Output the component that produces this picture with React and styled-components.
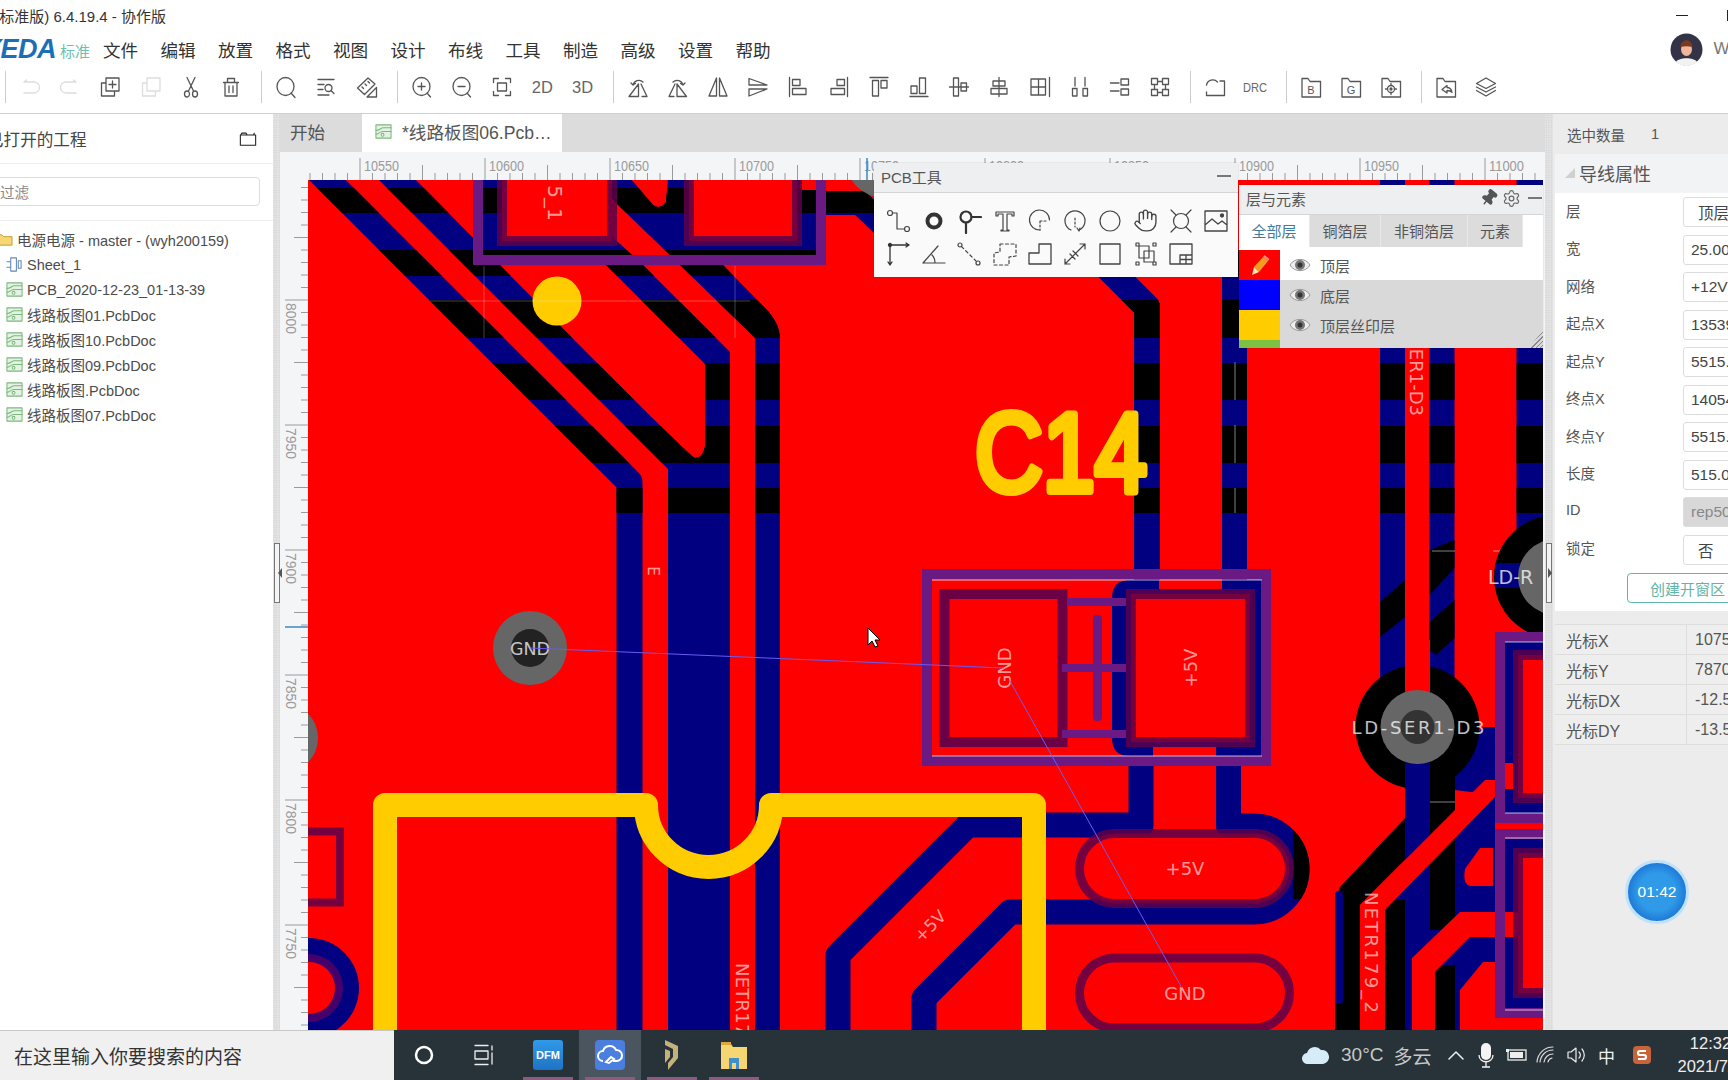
import React from 'react';
import styled, { createGlobalStyle } from 'styled-components';
import { Hand, Pin, Settings } from 'lucide-react';

const UI_FONT = '"Liberation Sans", "Noto Sans CJK SC", sans-serif';

const GlobalStyle = createGlobalStyle`
  html, body { margin: 0; padding: 0; background: #fff; }
  * { box-sizing: border-box; }
  body { font-family: ${UI_FONT}; color: #444; }
`;

const Page = styled.div`
  width: 1728px;
  height: 1080px;
  display: flex;
  flex-direction: column;
  overflow: hidden;
`;

/* ---------- top bars ---------- */
const TitleBar = styled.div`
  height: 30px;
  flex: none;
  display: flex;
  align-items: center;
  justify-content: space-between;
  font-size: 15px;
  color: #333;
`;

const TitleText = styled.div`
  width: 166px;
  display: flex;
  justify-content: flex-end;
  white-space: nowrap;
  overflow: hidden;
`;

const WinButtons = styled.div`
  display: flex;
  align-items: center;
  gap: 39px;
  margin-right: -11px;
`;

const WinMin = styled.span`
  width: 12px;
  height: 1px;
  background: #222;
`;

const WinMax = styled.span`
  width: 12px;
  height: 11px;
  border: 1px solid #222;
`;

const MenuRow = styled.div`
  height: 38px;
  flex: none;
  display: flex;
  align-items: center;
`;

const Logo = styled.div`
  width: 56px;
  display: flex;
  justify-content: flex-end;
  overflow: hidden;
  font-size: 27px;
  line-height: 32px;
  font-weight: 700;
  font-style: italic;
  color: #1b6fb9;
  letter-spacing: -0.5px;
  white-space: nowrap;
`;

const LogoTag = styled.span`
  margin: 2px 13px 0 4px;
  font-size: 15px;
  color: #6dbfb2;
`;

const MenuItem = styled.span`
  font-size: 17.6px;
  margin-right: 22.3px;
  color: #333;
`;

const UserBox = styled.div`
  margin-left: auto;
  margin-right: -10px;
  display: flex;
  align-items: center;
  gap: 11px;
  font-size: 17px;
  color: #777;
`;

const ToolRow = styled.div`
  height: 46px;
  flex: none;
  display: flex;
  align-items: flex-start;
  padding-top: 3px;
  padding-left: 0;
  margin-left: -5px;
  border-bottom: 1px solid #cfcfcf;
`;

const ToolSep = styled.span`
  width: 1px;
  height: 32px;
  margin: 0 4px 0 10px;
  background: #ccc;
  flex: none;
`;

const ToolBtn = styled.span`
  width: 40.2px;
  height: 32px;
  flex: none;
  display: flex;
  align-items: center;
  justify-content: center;
  font-size: ${p => (p.$small ? '13.5px' : '16.5px')};
  transform: ${p => (p.$small ? 'scaleX(.82)' : 'none')};
  color: #666;
`;

const Glyph = styled.svg`
  width: ${p => p.$size || 24}px;
  height: ${p => p.$size || 24}px;
  flex: none;
  fill: none;
  stroke: ${p => p.$color || '#555'};
  stroke-width: ${p => p.$weight || 1.3};
  stroke-linecap: round;
  stroke-linejoin: round;
`;

const GlyphText = styled.text`
  font-family: ${UI_FONT};
  font-size: 11px;
  fill: #555;
  stroke: none;
  text-anchor: middle;
`;

const TOOL_ICONS = {
  undo: <path d="M6 7h10a5.5 5.5 0 0 1 0 11H6M6 7l2.5-2" />,
  redo: <path d="M18 7H8a5.5 5.5 0 0 0 0 11h10M18 7l-2.5-2" />,
  copyAdd: <path d="M8 3h13v13H8zM8 8H3.500v13h13v-5M14.500 6v7M11 9.500h7" />,
  copy: <path d="M8 3h13v13H8zM8 8H3.500v13h13v-5" />,
  cut: <path d="M9.500 16 16 2.500M14.500 16 8 2.500M10.500 19a2.500 3 0 1 1-5 0 2.500 3 0 1 1 5 0zM18.500 19a2.500 3 0 1 1-5 0 2.500 3 0 1 1 5 0z" />,
  trash: <path d="M4.500 7.500h15M8.500 7V3.500h7V7M6 7.500V21h12V7.500M10 11v6.500M14 11v6.500" />,
  find: <path d="M20 11.500a8.500 9 0 1 1-17 0 8.500 9 0 1 1 17 0zM17 18l4 4.500" />,
  findList: <path d="M4 4.500h16M4 9.500h6M4 14.500h5M4 20h11M18 13a3.500 3.500 0 1 1-7 0 3.500 3.500 0 1 1 7 0zM17 15.500l3 3" />,
  ruler: <path d="M2.500 13 13 3l7 6-10.500 10.500zM7 12l1.500 1.500M10 9l1.500 1.500M13 6.500l1.500 1.500M21.500 12.500V22H12z" />,
  zoomIn: <path d="M20 11.500a8.500 9 0 1 1-17 0 8.500 9 0 1 1 17 0zM17 18l3.500 4M11.500 8v7M8 11.500h7" />,
  zoomOut: <path d="M20 11.500a8.500 9 0 1 1-17 0 8.500 9 0 1 1 17 0zM17 18l3.500 4M8 11.500h7" />,
  fit: <path d="M3.500 7.500V3.500h5M15.500 3.500h5v4M20.500 16.500v4h-5M8.500 20.500h-5v-4M7.500 8h9v8h-9z" />,
  rotL: <path d="M12.500 9v12.500H3zM15 9l6 12.500h-5M7 10a6 6 0 0 1 10-3M7 10l-2-2M7 10l2.500-1.500" />,
  rotR: <path d="M11 9v12.500h9.500zM9 9 3 21.500h5M17 10a6 6 0 0 0-10-3M17 10l2-2M17 10l-2.500-1.500" />,
  flipH: <path d="M10.500 3v18H3zM13.500 3v18H21z" />,
  flipV: <path d="M3 3.500 21 10H3zM3 14h18L3 21z" />,
  alignL: <path d="M3.500 2.500v19M6.500 4.500H14v6H6.500zM6.500 13.500h13.500v6H6.500z" />,
  alignR: <path d="M20.500 2.500v19M17.500 4.500H10v6h7.500zM17.500 13.500H4v6h13.500z" />,
  alignT: <path d="M3 2.500h18M5.500 5.500h6V21h-6zM14 5.500h6V13h-6z" />,
  alignB: <path d="M3 21.500h18M12.500 18.500h6V3h-6zM4 18.500h6V11H4z" />,
  alignV: <path d="M2.500 12h19M6.500 3h5v18h-5zM14 8h5.500v8H14z" />,
  alignH: <path d="M12 2.500v19M6 6h12v5H6zM4 13.500h16v5.500H4z" />,
  gridBar: <path d="M3 4h14.500v16H3zM10.500 4v16M3 12h14.500M21.500 2.500v19" />,
  distH: <path d="M7 2.500V11M17 2.500V11M4.500 13.500H9V21H4.500zM15 13.500h4.500V21H15z" />,
  distV: <path d="M2.500 8H11M2.500 16H11M13 4h7.500v6H13zM13 14h7.500v6H13z" />,
  cmd: <path d="M3.500 3.500h6v6h-6zM14.500 3.500h6v6h-6zM3.500 14.500h6v6h-6zM14.500 14.500h6v6h-6zM9.500 6.500h5M9.500 17.500h5M6.500 9.500v5M17.500 9.500v5" />,
  route: <path d="M3.500 10a6.500 6.500 0 0 1 11-3M17 6h4.500v14.500h-18V17" />,
  back: <path d="M3 3.500h6l2 3h10.500V22H3zM13 10.500 8 14.500l5 3.500v-2.500c2 0 4 .5 5 2-.5-3-2.500-5-5-5z" />,
  layers: <path d="M12 3 21.500 8.500 12 13.500 2.500 8.500zM2.500 12 12 17l9.500-5M2.500 15.500 12 21l9.500-5.500" />,
};

const LibGlyph = ({ children }) => (
  <Glyph viewBox="0 0 24 24">
    <path d="M3 3.500h6l2 3h10.500V22H3z" />
    {children}
  </Glyph>
);

const TOOL_GROUPS = [
  ['undo', 'redo', 'copyAdd', 'copy', 'cut', 'trash'],
  ['find', 'findList', 'ruler'],
  ['zoomIn', 'zoomOut', 'fit', '2D', '3D'],
  ['rotL', 'rotR', 'flipH', 'flipV', 'alignL', 'alignR', 'alignT', 'alignB', 'alignV', 'alignH', 'gridBar', 'distH', 'distV', 'cmd'],
  ['route', 'DRC'],
  ['libB', 'libG', 'libT'],
  ['back', 'layers'],
];

const renderTool = name => {
  if (name === '2D' || name === '3D') return <ToolBtn key={name}>{name}</ToolBtn>;
  if (name === 'DRC') return <ToolBtn key={name} $small>{name}</ToolBtn>;
  if (name === 'libB' || name === 'libG') {
    return (
      <ToolBtn key={name}>
        <LibGlyph><GlyphText x="12" y="18.500">{name[3]}</GlyphText></LibGlyph>
      </ToolBtn>
    );
  }
  if (name === 'libT') {
    return (
      <ToolBtn key={name}>
        <LibGlyph>
          <circle cx="12" cy="14" r="3.500" />
          <circle cx="12" cy="14" r="1" fill="#555" />
          <path d="M12 8.500v2M12 17.500v2M6.500 14h2M15.500 14h2" />
        </LibGlyph>
      </ToolBtn>
    );
  }
  const muted = name === 'undo' || name === 'redo' || name === 'copy';
  return (
    <ToolBtn key={name}>
      <Glyph viewBox="0 0 24 24" $color={muted ? '#ddd' : '#555'}>{TOOL_ICONS[name]}</Glyph>
    </ToolBtn>
  );
};

/* ---------- main area ---------- */
const Main = styled.div`
  flex: 1;
  min-height: 0;
  display: flex;
`;

const LeftPanel = styled.div`
  width: 273px;
  flex: none;
  background: #fff;
  display: flex;
  flex-direction: column;
`;

const PanelHead = styled.div`
  height: 50px;
  flex: none;
  display: flex;
  align-items: center;
  justify-content: space-between;
  padding: 0 16px 0 0;
  border-bottom: 1px solid #eee;
  font-size: 16.6px;
  color: #444;
`;

const HeadTitle = styled.span`
  margin-left: -13px;
`;

const FilterWrap = styled.div`
  height: 57px;
  flex: none;
  padding: 13px 13px 14px 0;
  border-bottom: 1px solid #eee;
`;

const FilterInput = styled.div`
  height: 29px;
  margin-left: -8px;
  padding-left: 7px;
  display: flex;
  align-items: center;
  border: 1px solid #ddd;
  border-radius: 4px;
  font-size: 14.5px;
  color: #888;
`;

const Tree = styled.div`
  padding-top: 6px;
  display: flex;
  flex-direction: column;
`;

const TreeRow = styled.div`
  height: 25px;
  display: flex;
  align-items: center;
  gap: 4px;
  padding-left: ${p => (p.$root ? '0' : '6px')};
  font-size: 14.5px;
  color: #4c4c4c;
  white-space: nowrap;
`;

const Splitter = styled.div`
  width: ${p => p.$w}px;
  flex: none;
  position: relative;
  background-color: #e2e2e2;
  background-image: radial-gradient(#c9c9c9 40%, transparent 45%);
  background-size: 2.500px 2.500px;
`;

const Grip = styled.div`
  position: absolute;
  top: 429px;
  left: ${p => p.$left}px;
  width: 6px;
  height: 60px;
  background: #f4f4f4;
  border: 1px solid #777;
  &::after {
    content: '';
    position: absolute;
    top: 24px;
    left: ${p => (p.$right ? '1px' : '-2px')};
    border: 5px solid transparent;
    ${p => (p.$right ? 'border-left: 4px solid #555;' : 'border-right: 4px solid #555;')}
  }
`;

const Center = styled.div`
  width: 1265px;
  flex: none;
  display: flex;
  flex-direction: column;
  background: #f4f5f7;
`;

const TabBar = styled.div`
  height: 38px;
  flex: none;
  display: flex;
  background: #dcdcdc;
`;

const Tab = styled.div`
  height: 38px;
  width: ${p => p.$w}px;
  display: flex;
  align-items: center;
  gap: 10px;
  padding-left: ${p => p.$pad}px;
  padding-bottom: 3px;
  font-size: 17.6px;
  color: #555;
  white-space: nowrap;
  background: ${p => (p.$active ? '#fff' : 'transparent')};
`;

const Workspace = styled.div`
  flex: 1;
  min-height: 0;
  position: relative;
  display: flex;
  flex-direction: column;
`;

const RulerSvg = styled.svg`
  display: block;
  flex: none;
`;

const RulerText = styled.text`
  font-family: "Liberation Sans", sans-serif;
  font-size: 14px;
  fill: #9a9a9a;
`;

const CanvasRow = styled.div`
  flex: 1;
  min-height: 0;
  display: flex;
`;

const BoardSvg = styled.svg`
  display: block;
  width: 1235px;
  height: 850px;
  flex: none;
  background: #ff0000;
`;

const BoardLabel = styled.text`
  font-family: "DejaVu Sans", sans-serif;
  font-size: ${p => p.$size || 18}px;
  fill: #fff;
  fill-opacity: ${p => p.$alpha || 0.62};
  text-anchor: ${p => p.$anchor || 'middle'};
  dominant-baseline: central;
`;

const SilkText = styled.text`
  font-family: "Liberation Sans", sans-serif;
  font-size: 112px;
  fill: #ffcc00;
  stroke: #ffcc00;
  stroke-width: 8px;
  stroke-linejoin: round;
  stroke-linecap: round;
`;

/* ---------- floating panels ---------- */
const FloatPanel = styled.div`
  position: absolute;
  left: ${p => p.$left}px;
  top: ${p => p.$top}px;
  width: ${p => p.$w}px;
  height: ${p => p.$h}px;
  background: ${p => p.$bg};
  display: flex;
  flex-direction: column;
  box-shadow: 0 0 2px rgba(0, 0, 0, 0.15);
`;

const FloatHead = styled.div`
  height: 30px;
  flex: none;
  display: flex;
  align-items: center;
  padding: 0 ${p => (p.$tight ? 1 : 7)}px 3px 7px;
  gap: 4px;
  background: #eeeff1;
  border-bottom: 1px solid #d4d4d4;
  font-size: 15px;
  color: #555;
`;

const FloatTitle = styled.span`
  margin-right: auto;
`;

const MinusBar = styled.span`
  width: 14px;
  height: 2px;
  background: #777;
  margin-left: 3px;
`;

const PinMark = styled(Pin)`
  transform: rotate(40deg);
`;

const ToolGrid = styled.div`
  display: grid;
  grid-template-columns: repeat(10, 35.300px);
  grid-auto-rows: 33px;
  padding: 11px 0 0 7px;
`;

const ToolCell = styled.span`
  display: flex;
  align-items: center;
  justify-content: center;
  color: #444;
`;

const LayerTabs = styled.div`
  height: 35px;
  flex: none;
  display: flex;
  padding-bottom: 3px;
  background: #fff;
`;

const LayerTab = styled.div`
  width: ${p => p.$w}px;
  display: flex;
  align-items: center;
  justify-content: center;
  padding-bottom: 2px;
  font-size: 15px;
  color: ${p => (p.$active ? '#3f7c9c' : '#555')};
  background: ${p => (p.$active ? '#fff' : '#dcdcdc')};
  border-right: 1px solid #e8e8e8;
`;

const LayerRow = styled.div`
  height: ${p => p.$h}px;
  flex: none;
  display: flex;
  align-items: center;
  gap: 9px;
  font-size: 15px;
  color: #555;
  background: ${p => (p.$on ? '#fff' : '#d9d9d9')};
`;

const Swatch = styled.span`
  width: 41px;
  height: 100%;
  margin-right: 0;
  flex: none;
  display: flex;
  align-items: center;
  justify-content: center;
  background: ${p => p.$color};
`;

const Hatch = styled.span`
  position: absolute;
  right: 0;
  bottom: 0;
  width: 14px;
  height: 18px;
  background: repeating-linear-gradient(135deg, transparent 0 2px, #888 2px 3px);
  clip-path: polygon(100% 0, 100% 100%, 0 100%);
`;

/* ---------- right panel ---------- */
const RightPanel = styled.div`
  width: 175px;
  flex: none;
  position: relative;
  overflow: hidden;
  background: #ececec;
  display: flex;
  flex-direction: column;
`;

const CountBar = styled.div`
  height: 40px;
  flex: none;
  display: flex;
  align-items: center;
  gap: 26px;
  padding-left: 14px;
  font-size: 14.5px;
  color: #555;
`;

const PropHead = styled.div`
  height: 39px;
  flex: none;
  margin-left: 2px;
  display: flex;
  align-items: center;
  gap: 4px;
  padding-left: 10px;
  padding-bottom: 2px;
  background: #f2f3f5;
  font-size: 18px;
  color: #555;
  &::before {
    content: '';
    border-bottom: 10px solid #d0d0d0;
    border-left: 10px solid transparent;
  }
`;

const PropForm = styled.div`
  height: 418px;
  flex: none;
  margin-left: 2px;
  padding-top: 4px;
  background: #fff;
  display: flex;
  flex-direction: column;
  gap: 7.500px;
`;

const PropRow = styled.div`
  height: 30px;
  flex: none;
  display: flex;
  align-items: center;
  padding-left: 11px;
  font-size: 14.500px;
  color: #555;
`;

const PropLabel = styled.span`
  width: 117px;
  flex: none;
  margin-top: -4px;
`;

const PropValue = styled.div`
  width: 90px;
  height: 30px;
  flex: none;
  display: flex;
  align-items: center;
  padding-left: ${p => (p.$select ? '14px' : '7px')};
  border: 1px solid #ddd;
  border-radius: 3px;
  background: ${p => (p.$off ? '#d8d8d8' : '#fff')};
  color: ${p => (p.$off ? '#888' : '#444')};
  font-size: 15.500px;
  white-space: nowrap;
  overflow: hidden;
`;

const WindowBtn = styled.div`
  width: 130px;
  height: 30px;
  margin: 1px 0 0 72px;
  flex: none;
  display: flex;
  align-items: center;
  padding-left: 22px;
  border: 1px solid #5fb5a7;
  border-radius: 4px;
  color: #5fb5a7;
  font-size: 15px;
  white-space: nowrap;
`;

const CursorTable = styled.div`
  margin: 13px 0 0 2px;
  flex: none;
  display: flex;
  flex-direction: column;
  border-top: 1px solid #ddd;
`;

const CursorRow = styled.div`
  height: 30px;
  display: flex;
  align-items: center;
  background: #eee;
  border-bottom: 1px solid #ddd;
  font-size: 16px;
  color: #555;
`;

const CursorKey = styled.span`
  width: 132px;
  flex: none;
  height: 100%;
  padding-left: 11px;
  display: flex;
  align-items: center;
  border-right: 1px solid #ddd;
`;

const CursorVal = styled.span`
  flex: none;
  padding-left: 8px;
  white-space: nowrap;
`;

const Timer = styled.div`
  position: absolute;
  left: 72px;
  top: 746px;
  width: 64px;
  height: 64px;
  border-radius: 50%;
  display: flex;
  align-items: center;
  justify-content: center;
  color: #fff;
  font-size: 15.500px;
  background: radial-gradient(circle at 50% 50%, #2f9be8 0 45%, #1f78d8 72%);
  border: 3px solid #bfe2fb;
`;

/* ---------- taskbar ---------- */
const Taskbar = styled.div`
  height: 50px;
  flex: none;
  display: flex;
  align-items: stretch;
  background: #283239;
  color: #ddd;
`;

const SearchBox = styled.div`
  width: 394px;
  flex: none;
  display: flex;
  align-items: center;
  padding-left: 14px;
  background: #f0f0f0;
  border-top: 1px solid #c8c8c8;
  font-size: 19px;
  color: #333;
`;

const TaskSlot = styled.div`
  width: ${p => p.$w || 60}px;
  flex: none;
  position: relative;
  margin-left: ${p => p.$gap || 0}px;
  display: flex;
  align-items: center;
  justify-content: center;
  background: ${p => (p.$active ? '#4a555f' : 'transparent')};
  ${p =>
    p.$open &&
    `&::after {
      content: '';
      position: absolute;
      left: 6px;
      right: 6px;
      bottom: 0;
      height: 3px;
      background: #8d5b80;
    }`}
`;

const DfmBadge = styled.span`
  width: 30px;
  height: 30px;
  border-radius: 3px;
  display: flex;
  align-items: center;
  justify-content: center;
  font-family: "Liberation Sans", sans-serif;
  font-size: 11px;
  font-weight: 700;
  color: #fff;
  background: linear-gradient(#2f9ae8, #1e74c4);
`;

const Tray = styled.div`
  margin-left: auto;
  width: 426px;
  flex: none;
  display: flex;
  align-items: center;
  overflow: hidden;
  color: #c9c9c9;
`;

const TrayCloud = styled.svg`
  width: 27px;
  height: 20px;
  flex: none;
`;

const Weather = styled.span`
  flex: none;
  font-size: 19px;
  margin-left: ${p => p.$gap}px;
  margin-right: ${p => p.$after || 0}px;
  white-space: nowrap;
`;

const TrayItem = styled.span`
  width: 30px;
  flex: none;
  margin-left: ${p => p.$gap || 0}px;
  display: flex;
  align-items: center;
  justify-content: center;
  font-size: 17px;
  color: #f0f0f0;
`;

const Clock = styled.div`
  width: 66px;
  flex: none;
  margin-left: 20px;
  text-align: center;
  font-size: 16.500px;
  line-height: 23px;
  color: #eee;
  white-space: nowrap;
`;

/* ---------- small drawings ---------- */
const PcbFileIcon = () => (
  <Glyph viewBox="0 0 18 18" $size={17} $color="#7cb87c" $weight={1.100}>
    <rect x="1" y="2" width="16" height="14" fill="#e4f2e4" />
    <path d="M1 8c4 0 5-3 8-3h8M1 12c3 0 4-3 7-3h9" />
    <circle cx="8" cy="12.500" r="1.500" fill="#fff" />
  </Glyph>
);

const SchIcon = () => (
  <Glyph viewBox="0 0 18 18" $size={17} $color="#5f87b5" $weight={1.100}>
    <path d="M5 2h6v14H5zM1 6h4M1 12h4M13 5h3v8h-3z" />
  </Glyph>
);

const FolderGlyph = () => (
  <Glyph viewBox="0 0 20 16" $size={18} $color="#222" $weight={1.200}>
    <path d="M2 3.500 3 1.500h5l1 2h7l1-2M1.500 3.500h17V15h-17z" />
  </Glyph>
);

const RootFolder = styled(Glyph)`
  margin-left: -4px;
`;

const ProjectFolder = () => (
  <RootFolder viewBox="0 0 18 16" $size={17} $color="#c49a2c" $weight={1}>
    <path d="M1 3h5l2 2h9v9H1z" fill="#f7d774" />
  </RootFolder>
);

const Avatar = () => (
  <svg width="33" height="33" viewBox="0 0 33 33">
    <circle cx="16.500" cy="16.500" r="16" fill="#333348" />
    <path d="M6 29c3-5 18-5 21 0a16 16 0 0 1-21 0z" fill="#f2f2f2" />
    <ellipse cx="16.500" cy="16" rx="5.500" ry="7" fill="#f0b59a" />
    <path d="M10.500 14c0-9 12-9 12 0-4-1-8-1-12 0z" fill="#7a3a20" />
  </svg>
);

const Eye = () => (
  <svg width="22" height="14" viewBox="0 0 22 14">
    <path d="M1 7c4-7.500 16-7.500 20 0-4 7.500-16 7.500-20 0z" fill="#eee" stroke="#999" />
    <circle cx="11" cy="7" r="5" fill="#777" />
    <circle cx="11" cy="7" r="2.500" fill="#333" />
  </svg>
);

const PencilMark = () => (
  <svg width="22" height="22" viewBox="0 0 22 22">
    <path d="M5 13 14 3l5 4-9 11z" fill="#f39c1f" />
    <path d="M14 3l1.500-2 5 4L19 7z" fill="#ef8a8a" />
    <path d="M5 13l5 5-7 3z" fill="#fbe3b8" />
  </svg>
);

const PCB_TOOLS = [
  <Glyph viewBox="0 0 26 26" $size={26} $color="#444" $weight={1.200}><circle cx="4" cy="5" r="2.500" /><circle cx="21" cy="21" r="2.500" /><path d="M6.500 5H11V21h7.500" /></Glyph>,
  <Glyph viewBox="0 0 26 26" $size={26} $color="#333" $weight={4}><circle cx="13" cy="13" r="6.500" /></Glyph>,
  <Glyph viewBox="0 0 26 26" $size={26} $color="#333" $weight={2.200}><circle cx="10" cy="9" r="5.500" /><path d="M15.500 9H25M10 14.500V25" /></Glyph>,
  <Glyph viewBox="0 0 26 26" $size={26} $color="#444" $weight={1.200}><path d="M4 8V4h18v4h-2V6h-5v16h2v1H9v-1h2V6H6v2z" /></Glyph>,
  <Glyph viewBox="0 0 26 26" $size={26} $color="#444" $weight={1.200}><path d="M13 22A10 10 0 1 1 22.500 12" /><path d="M13 13v9M13 13h8" strokeDasharray="2 2" /></Glyph>,
  <Glyph viewBox="0 0 26 26" $size={26} $color="#444" $weight={1.200}><path d="M9 22A10 10 0 1 1 17 22" /><path d="M13 10v9" strokeDasharray="2 2" /><path d="M15 20l2 3 1-3" /></Glyph>,
  <Glyph viewBox="0 0 26 26" $size={26} $color="#444" $weight={1.200}><circle cx="13" cy="13" r="10" /></Glyph>,
  <Hand size={25} strokeWidth={1.300} />,
  <Glyph viewBox="0 0 26 26" $size={26} $color="#444" $weight={1.200}><circle cx="13" cy="13" r="7.500" /><path d="M3 2l5 5M23 2l-5 5M3 24l5-5M23 24l-5-5" /></Glyph>,
  <Glyph viewBox="0 0 26 26" $size={26} $color="#444" $weight={1.300}><path d="M2 3h22v20H2zM2 17l7-6 6 5 4-3 5 4" /><circle cx="19" cy="7.500" r="1.500" fill="#444" /></Glyph>,
  <Glyph viewBox="0 0 26 26" $size={26} $color="#333" $weight={1.300}><path d="M4 24V4h19M4 24l-2-3M4 24l2-3M23 4l-3-2M23 4l-3 2" /><circle cx="4" cy="4" r="1.500" fill="#333" /></Glyph>,
  <Glyph viewBox="0 0 26 26" $size={26} $color="#444" $weight={1.200}><path d="M2 22h22M2 22 17 5M11 14c2 2 3 4 3 8" /></Glyph>,
  <Glyph viewBox="0 0 26 26" $size={26} $color="#444" $weight={1.200}><circle cx="4" cy="4" r="2" /><circle cx="22" cy="22" r="2" /><path d="M5.500 5.500 20.500 20.500" strokeDasharray="3 3" /></Glyph>,
  <Glyph viewBox="0 0 26 26" $size={26} $color="#444" $weight={1.200}><path d="M8 3h16v12l-7 1v8H2V12l6-1z" strokeDasharray="3 2.500" /></Glyph>,
  <Glyph viewBox="0 0 26 26" $size={26} $color="#444" $weight={1.300}><path d="M2 23V12h10V3h12v20z" /></Glyph>,
  <Glyph viewBox="0 0 26 26" $size={26} $color="#444" $weight={1.200}><path d="M3 23 23 3M3 23v-5M3 23h5M23 3v5M23 3h-5M11 10l5 5M8 13l5 5" /></Glyph>,
  <Glyph viewBox="0 0 26 26" $size={26} $color="#444" $weight={1.300}><path d="M3 3h20v20H3z" /></Glyph>,
  <Glyph viewBox="0 0 26 26" $size={26} $color="#444" $weight={1.200}><path d="M6 5h10v12H6zM11 10h10v11H11zM3 2h3v3H3zM20 2h3v3h-3zM3 21h3v3H3zM20 21h3v3h-3z" /></Glyph>,
  <Glyph viewBox="0 0 26 26" $size={26} $color="#444" $weight={1.300}><path d="M2 3h22v20H2zM12 14h12M12 14v9M12 18.500h12M18 14v9" /></Glyph>,
];

/* ---------- rulers ---------- */
const range = (from, to, step) => {
  const out = [];
  for (let v = from; v <= to; v += step) out.push(v);
  return out;
};

const TopRuler = () => (
  <RulerSvg width="1265" height="28" viewBox="280 152 1265 28">
    {range(0, 98, 1).map(i => {
      const x = 310 + i * 12.5;
      const top = i % 10 === 4 ? 158 : i % 5 === 4 ? 165 : 173;
      return <line key={i} x1={x} x2={x} y1={top} y2="180" stroke="#9a9a9a" strokeWidth="1" />;
    })}
    {range(0, 9, 1).map(i => (
      <RulerText key={i} x={364 + i * 125} y="171" textLength="35" lengthAdjust="spacingAndGlyphs">
        {10550 + i * 50}
      </RulerText>
    ))}
    <line x1="867" x2="867" y1="158" y2="180" stroke="#3a87c8" strokeWidth="1.500" />
  </RulerSvg>
);

const SideRuler = () => (
  <RulerSvg width="28" height="850" viewBox="280 180 28 850">
    {range(0, 67, 1).map(i => {
      const y = 187.500 + i * 12.5;
      const left = i % 10 === 9 ? 285 : i % 5 === 4 ? 294 : 301;
      return <line key={i} x1={left} x2="308" y1={y} y2={y} stroke="#9a9a9a" strokeWidth="1" />;
    })}
    {[8000, 7950, 7900, 7850, 7800, 7750].map((label, i) => {
      const y = 303 + i * 125;
      return (
        <RulerText key={label} transform={`rotate(90 286 ${y})`} x="286" y={y} textLength="31" lengthAdjust="spacingAndGlyphs">
          {label}
        </RulerText>
      );
    })}
    <line x1="285" x2="308" y1="627" y2="627" stroke="#3a87c8" strokeWidth="1.500" />
  </RulerSvg>
);

/* ---------- the board ---------- */
const BANDS = [[188, 213], [250, 276], [300, 338], [363, 400], [426, 463], [488, 513]];
const PAD_EDGE = '#5c004b';
const OUTLINE = '#6a1a82';
const NAVY = '#000080';
const RED = '#ff0000';

// everything that gets the navy / black striping
const Traces = ({ color }) => (
  <g fill={color} stroke="none">
    <g fill="none" stroke={color} strokeWidth="26" strokeLinejoin="round">
      <path d="M306.500 159 629.500 482V1040" />
      <path d="M826 203H860L882 224" strokeWidth="24" />
      <path d="M1090 250 1147 307V580" strokeWidth="26" />
      <path d="M1234.500 250V580" strokeWidth="25" />
      <path d="M1392.500 170V680" strokeWidth="25" />
      <path d="M1442 170V680" strokeWidth="25" />
      <path d="M1530 170V560" strokeWidth="27" />
    </g>
    <path d="M378 179 668 469V1040H730V352L643 265H606L705 364V446Q703 458 695 458Q690 458 415 179Z" />
    <path d="M482 179H607V232L643 265H482Z" />
    <path d="M596 179H631L653 205Q660 210 666 202L668 179H800V190H820V265H723L768 311Q780 325 780 338V1040H755V338L680 265 617 204Z" />
  </g>
);

const BoardArt = () => (
  <BoardSvg viewBox="308 180 1235 850">
    <defs>
      <clipPath id="bands">
        {BANDS.map(([a, b]) => <rect key={a} x="300" y={a} width="1300" height={b - a} />)}
      </clipPath>
      <clipPath id="ringEnd"><rect x="1293" y="829" width="30" height="70" /></clipPath>
    </defs>

    {/* lower routes, no striping */}
    <g fill="none" stroke={NAVY} strokeWidth="25" strokeLinejoin="round">
      <path d="M1141 750V825H968L838 955V1040" />
      <path d="M1228.500 750V826H1254A43 43 0 0 1 1254 912H1010L924 998V1040" />
    </g>
    <path d="M1228.500 826H1254A43 43 0 0 1 1254 912" fill="none" stroke="#000" strokeWidth="25" clipPath="url(#ringEnd)" />

    <Traces color={NAVY} />
    <g clipPath="url(#bands)"><Traces color="#000" /></g>

    {/* striped stubs above the LD-SER1 pad */}
    <polygon points="1380,602 1405,580 1405,617 1380,637" fill="#000" />
    <polygon points="1429.500,550 1454.500,540 1454.500,568 1429.500,595" fill="#000" />
    <polygon points="1429.500,622 1454.500,600 1454.500,638 1436,655 1429.500,650" fill="#000" />
    <path d="M1432 551H1455M1493 551H1525M1235 362V400M1235 425V463M1235 488V513" stroke="#fff" strokeOpacity=".5" strokeWidth="1" fill="none" />

    {/* fan-out under the LD-SER1 pad */}
    <polygon points="1385,1040 1385,905 1495,795 1495,1040" fill={NAVY} />
    <polygon points="1455,790 1455,760 1483,727 1495,727 1495,795" fill={NAVY} />
    <polygon points="1405,785 1422,800 1340,887 1335,900 1335,1040 1360,1040 1360,905 1405,860" fill="#000" />
    <path d="M1339 895V1000" stroke={NAVY} strokeWidth="8" strokeLinecap="round" />
    <rect x="1405" y="755" width="25" height="275" fill={NAVY} />
    <rect x="1430" y="770" width="25" height="160" fill="#000" />
    <rect x="1385" y="900" width="20" height="130" fill="#000" />
    <rect x="1435" y="965" width="20" height="65" fill="#000" />
    <polygon points="1485,780 1497,780 1497,795 1385,910 1385,1040 1360,1040 1360,905 1373,892" fill={RED} />
    <polygon points="1520,912 1460,912 1412,958 1412,1040 1435,1040 1435,972 1470,937 1520,937" fill={RED} />
    <path d="M1493 848H1480L1465 869Q1462 886 1472 886H1493Z" fill={RED} />
    <polygon points="1460,990 1483,962 1495,962 1495,1030 1460,1030" fill={RED} />
    <path d="M1430 802H1455" stroke="#fff" strokeOpacity=".5" strokeWidth="1" />

    {/* top footprint */}
    <rect x="478" y="120" width="343" height="140" fill="none" stroke={OUTLINE} strokeWidth="10" />
    <rect x="502" y="120" width="110" height="121" fill={RED} stroke={PAD_EDGE} strokeOpacity=".85" strokeWidth="10" />
    <rect x="689" y="120" width="108" height="121" fill={RED} stroke={PAD_EDGE} strokeOpacity=".85" strokeWidth="10" />
    <circle cx="884" cy="160" r="38" fill="#666" />
    <circle cx="557" cy="301" r="24.500" fill="#ffcc00" />
    <path d="M430 301H750M484 266V338M735 266V338" stroke="#fff" strokeOpacity=".25" strokeWidth="1" fill="none" />

    {/* silk */}
    <path d="M385 1040V805H646A62.500 62 0 0 0 771 805H1034V1040" fill="none" stroke="#ffcc00" strokeWidth="24" strokeLinejoin="round" strokeLinecap="round" />
    <SilkText x="975" y="491" textLength="172" lengthAdjust="spacingAndGlyphs">C14</SilkText>

    {/* capacitor footprint */}
    <path d="M1130 580H1262V756H1130Q1112 756 1112 738V598Q1112 580 1130 580Z" fill={NAVY} />
    <rect x="1159" y="580" width="63" height="9" fill={RED} />
    <rect x="1153" y="747" width="63" height="9" fill={RED} />
    <rect x="927" y="574" width="339" height="187" fill="none" stroke={OUTLINE} strokeWidth="10" />
    <path d="M932 580H1262M932 756H1262" stroke="#fff" strokeOpacity=".7" strokeWidth="1" />
    <rect x="944.500" y="594" width="118" height="148" fill={RED} stroke={PAD_EDGE} strokeOpacity=".9" strokeWidth="10" />
    <rect x="1131" y="594" width="119" height="148" fill={RED} stroke={PAD_EDGE} strokeOpacity=".85" strokeWidth="10" />
    <g fill={OUTLINE}>
      <rect x="1067" y="598" width="59" height="8" />
      <rect x="1062" y="664" width="64" height="8" />
      <rect x="1062" y="730" width="64" height="8" />
      <rect x="1093" y="615" width="9" height="106" rx="4" />
    </g>

    {/* ovals */}
    <rect x="1079.500" y="833.500" width="210" height="70" rx="35" fill={RED} stroke={PAD_EDGE} strokeOpacity=".85" strokeWidth="9" />
    <rect x="1079.500" y="958" width="210" height="70" rx="35" fill={RED} stroke={PAD_EDGE} strokeOpacity=".85" strokeWidth="9" />

    {/* left edge bits */}
    <rect x="280" y="831.500" width="60" height="71" fill="none" stroke={PAD_EDGE} strokeOpacity=".85" strokeWidth="8" />
    <circle cx="309" cy="988" r="50" fill={NAVY} />
    <circle cx="309" cy="988" r="34" fill="#46006a" />
    <circle cx="309" cy="988" r="26" fill={RED} />
    <circle cx="283" cy="738" r="35" fill="#666" />

    {/* vias */}
    <circle cx="530" cy="648" r="37" fill="#666" />
    <circle cx="530" cy="648" r="19" fill="#222" />
    <circle cx="1417.500" cy="727" r="62" fill="#000" />
    <rect x="1405" y="640" width="25" height="60" fill={RED} />
    <rect x="1405" y="760" width="25" height="30" fill={NAVY} />
    <circle cx="1417.500" cy="727" r="37" fill="#666" />
    <circle cx="1417.500" cy="727" r="17" fill="#333" />
    <circle cx="1556" cy="577" r="62" fill="#000" />
    <rect x="1495" y="563" width="30" height="25" fill={NAVY} />
    <circle cx="1556" cy="577" r="38" fill="#666" />

    {/* right footprints */}
    <rect x="1500" y="637" width="80" height="181" fill={NAVY} />
    <rect x="1505" y="763" width="8" height="26" fill={RED} />
    <rect x="1518" y="655" width="80" height="143" fill={RED} stroke={PAD_EDGE} strokeOpacity=".85" strokeWidth="10" />
    <rect x="1500" y="637" width="80" height="181" fill="none" stroke={OUTLINE} strokeWidth="10" />
    <rect x="1500" y="834" width="80" height="179" fill={NAVY} />
    <rect x="1505" y="912" width="13" height="25" fill={RED} />
    <rect x="1518" y="853" width="80" height="140" fill={RED} stroke={PAD_EDGE} strokeOpacity=".85" strokeWidth="10" />
    <rect x="1500" y="834" width="80" height="179" fill="none" stroke={OUTLINE} strokeWidth="10" />
    <path d="M1505 642H1543M1505 813H1543M1505 838H1543M1505 1010H1543" stroke="#fff" strokeOpacity=".7" strokeWidth="1" />

    {/* net labels */}
    <BoardLabel transform="rotate(90 555 203)" x="555" y="203" $size={20}>5_1</BoardLabel>
    <BoardLabel transform="rotate(90 653 571)" x="653" y="571" $size={15}>E</BoardLabel>
    <BoardLabel x="530" y="648" $alpha={0.75} textLength="40" lengthAdjust="spacingAndGlyphs">GND</BoardLabel>
    <BoardLabel transform="rotate(90 742 963)" x="742" y="963" $anchor="start" textLength="105" $size={18}>NETR179_1</BoardLabel>
    <BoardLabel transform="rotate(-90 1004 668)" x="1004" y="668">GND</BoardLabel>
    <BoardLabel transform="rotate(-90 1190 668)" x="1190" y="668">+5V</BoardLabel>
    <BoardLabel x="1185" y="868">+5V</BoardLabel>
    <BoardLabel x="1185" y="993">GND</BoardLabel>
    <BoardLabel transform="rotate(-45 930 926)" x="930" y="926" $size={17}>+5V</BoardLabel>
    <BoardLabel transform="rotate(90 1416 416)" x="1416" y="416" $anchor="end">LD-SER1-D3</BoardLabel>
    <BoardLabel transform="rotate(90 1371 892)" x="1371" y="892" $anchor="start" textLength="121">NETR179_2</BoardLabel>
    <BoardLabel x="1418" y="727" $alpha={0.75} textLength="133">LD-SER1-D3</BoardLabel>
    <BoardLabel x="1488" y="577" $anchor="start" $alpha={0.75} $size={19}>LD-R</BoardLabel>

    {/* ratlines */}
    <path d="M530 648 1004 668M1010 681 1182 988" fill="none" stroke="#6a5cf0" strokeWidth="1" />

    {/* cursor */}
    <path d="M868 628V645L872 641 875 647 878 646 875 640H880Z" fill="#fff" stroke="#000" strokeWidth="1" />
  </BoardSvg>
);

const LAYERS = [
  { name: '顶层', color: '#ff0000', h: 30, on: true },
  { name: '底层', color: '#0000ff', h: 30 },
  { name: '顶层丝印层', color: '#ffcc00', h: 30 },
];

const PROPS = [
  ['层', '顶层', 'select'],
  ['宽', '25.000'],
  ['网络', '+12V'],
  ['起点X', '13539.500'],
  ['起点Y', '5515.500'],
  ['终点X', '14054.500'],
  ['终点Y', '5515.500'],
  ['长度', '515.000'],
  ['ID', 'rep508', 'off'],
  ['锁定', '否', 'select'],
];

const CURSOR = [['光标X', '10758.500'], ['光标Y', '7870.000'], ['光标DX', '-12.500'], ['光标DY', '-13.500']];

const FILES = ['PCB_2020-12-23_01-13-39', '线路板图01.PcbDoc', '线路板图10.PcbDoc', '线路板图09.PcbDoc', '线路板图.PcbDoc', '线路板图07.PcbDoc'];

const MENUS = ['文件', '编辑', '放置', '格式', '视图', '设计', '布线', '工具', '制造', '高级', '设置', '帮助'];

export default function App() {
  return (
    <Page>
      <GlobalStyle />
      <TitleBar>
        <TitleText>立创EDA(标准版) 6.4.19.4 - 协作版</TitleText>
        <WinButtons><WinMin /><WinMax /></WinButtons>
      </TitleBar>

      <MenuRow>
        <Logo>EASYEDA</Logo>
        <LogoTag>标准</LogoTag>
        {MENUS.map(m => <MenuItem key={m}>{m}</MenuItem>)}
        <UserBox><Avatar /><span>Wy</span></UserBox>
      </MenuRow>

      <ToolRow>
        {TOOL_GROUPS.map((group, i) => (
          <React.Fragment key={i}>
            <ToolSep />
            {group.map(renderTool)}
          </React.Fragment>
        ))}
      </ToolRow>

      <Main>
        <LeftPanel>
          <PanelHead>
            <HeadTitle>已打开的工程</HeadTitle>
            <FolderGlyph />
          </PanelHead>
          <FilterWrap><FilterInput>过滤</FilterInput></FilterWrap>
          <Tree>
            <TreeRow $root><ProjectFolder />电源电源 - master - (wyh200159)</TreeRow>
            <TreeRow><SchIcon />Sheet_1</TreeRow>
            {FILES.map(f => <TreeRow key={f}><PcbFileIcon />{f}</TreeRow>)}
          </Tree>
        </LeftPanel>

        <Splitter $w={7}><Grip $left={1} /></Splitter>

        <Center>
          <TabBar>
            <Tab $w={82} $pad={10}>开始</Tab>
            <Tab $w={200} $pad={13} $active>
              <PcbFileIcon />*线路板图06.Pcb…
            </Tab>
          </TabBar>
          <Workspace>
            <TopRuler />
            <CanvasRow>
              <SideRuler />
              <BoardArt />
            </CanvasRow>

            <FloatPanel $left={594} $top={11} $w={364} $h={114} $bg="#fafafa">
              <FloatHead>
                <FloatTitle>PCB工具</FloatTitle>
                <MinusBar />
              </FloatHead>
              <ToolGrid>
                {PCB_TOOLS.map((tool, i) => <ToolCell key={i}>{tool}</ToolCell>)}
              </ToolGrid>
            </FloatPanel>

            <FloatPanel $left={959} $top={33} $w={304} $h={163} $bg="#d9d9d9">
              <FloatHead $tight>
                <FloatTitle>层与元素</FloatTitle>
                <PinMark size={18} fill="#555" stroke="#555" />
                <Settings size={19} strokeWidth={1.500} color="#666" />
                <MinusBar />
              </FloatHead>
              <LayerTabs>
                <LayerTab $w={71} $active>全部层</LayerTab>
                <LayerTab $w={71}>铜箔层</LayerTab>
                <LayerTab $w={87}>非铜箔层</LayerTab>
                <LayerTab $w={55}>元素</LayerTab>
              </LayerTabs>
              {LAYERS.map(l => (
                <LayerRow key={l.name} $h={l.h} $on={l.on}>
                  <Swatch $color={l.color}>{l.on && <PencilMark />}</Swatch>
                  <Eye />
                  {l.name}
                </LayerRow>
              ))}
              <LayerRow $h={8}><Swatch $color="#7dc242" /></LayerRow>
              <Hatch />
            </FloatPanel>
          </Workspace>
        </Center>

        <Splitter $w={8}><Grip $left={1} $right /></Splitter>

        <RightPanel>
          <CountBar>选中数量<span>1</span></CountBar>
          <PropHead>导线属性</PropHead>
          <PropForm>
            {PROPS.map(([label, value, kind]) => (
              <PropRow key={label}>
                <PropLabel>{label}</PropLabel>
                <PropValue $select={kind === 'select'} $off={kind === 'off'}>{value}</PropValue>
              </PropRow>
            ))}
            <WindowBtn>创建开窗区</WindowBtn>
          </PropForm>
          <CursorTable>
            {CURSOR.map(([k, v]) => (
              <CursorRow key={k}><CursorKey>{k}</CursorKey><CursorVal>{v}</CursorVal></CursorRow>
            ))}
          </CursorTable>
          <Timer>01:42</Timer>
        </RightPanel>
      </Main>

      <Taskbar>
        <SearchBox>在这里输入你要搜索的内容</SearchBox>
        <TaskSlot>
          <Glyph viewBox="0 0 24 24" $color="#fff" $weight={2.500} $size={24}><circle cx="12" cy="12" r="8" /></Glyph>
        </TaskSlot>
        <TaskSlot>
          <Glyph viewBox="0 0 24 24" $color="#eee" $weight={1.300} $size={24}><path d="M3 2.500h13M3 21.500h13M3 8h13v8H3zM20 3v4M20 10v11" /></Glyph>
        </TaskSlot>
        <TaskSlot $w={62} $open $gap={3}><DfmBadge>DFM</DfmBadge></TaskSlot>
        <TaskSlot $w={62} $open $active>
          <svg width="30" height="30" viewBox="0 0 30 30">
            <rect width="30" height="30" rx="4" fill="#4a7fe0" />
            <path d="M8 21a5 5 0 0 1 0-10 7 7 0 0 1 13-1 5.500 5.500 0 0 1 1 11h-4M11 22l5-5 3 2-5 4z" fill="none" stroke="#fff" strokeWidth="2" />
          </svg>
        </TaskSlot>
        <TaskSlot $w={62} $open>
          <svg width="20" height="34" viewBox="0 0 20 34">
            <path d="M3 2l13 6v12L6 32v-7l5-6V11L3 7zM3 11l5 2v6l-5 6z" fill="#c4b27a" />
          </svg>
        </TaskSlot>
        <TaskSlot $w={62} $open>
          <svg width="28" height="30" viewBox="0 0 28 30">
            <path d="M1 4h10l2 3h14v22H1z" fill="#f6d670" />
            <path d="M1 2h10v3H1z" fill="#d9a93b" />
            <path d="M9 18h10v11h-3v-6h-4v6H9z" fill="#3e8fd0" />
          </svg>
        </TaskSlot>

        <Tray>
          <TrayCloud viewBox="0 0 27 20">
            <path d="M6 19a5.500 5.500 0 0 1-1-11A8 8 0 0 1 19 5a6.500 6.500 0 0 1 2 14z" fill="#d6ecf8" />
          </TrayCloud>
          <Weather $gap={12}>30°C</Weather>
          <Weather $gap={10} $after={10}>多云</Weather>
          <TrayItem>
            <Glyph viewBox="0 0 20 20" $size={20} $color="#eee" $weight={1.500}><path d="M3 14l7-7 7 7" /></Glyph>
          </TrayItem>
          <TrayItem>
            <svg width="16" height="26" viewBox="0 0 16 26">
              <rect x="3" y="1" width="10" height="17" rx="5" fill="#f4f4f4" />
              <path d="M1 13c0 9 14 9 14 0M8 20v5M4 25h8" fill="none" stroke="#f4f4f4" strokeWidth="1.300" />
            </svg>
          </TrayItem>
          <TrayItem>
            <svg width="22" height="14" viewBox="0 0 22 14">
              <rect x="3" y="2" width="18" height="10" fill="none" stroke="#eee" strokeWidth="1.300" />
              <rect x="5" y="4" width="13" height="6" fill="#eee" />
              <path d="M1 1v3h3V1z" fill="#eee" />
            </svg>
          </TrayItem>
          <TrayItem>
            <Glyph viewBox="0 0 20 20" $size={20} $color="#ddd" $weight={1.200}>
              <path d="M1 17A16 16 0 0 1 17 2M4 17A13 13 0 0 1 17 5M8 17a9 9 0 0 1 9-8M12 17a5 5 0 0 1 4-4" />
            </Glyph>
          </TrayItem>
          <TrayItem>
            <Glyph viewBox="0 0 20 20" $size={20} $color="#eee" $weight={1.200}>
              <path d="M2 7v6h3l5 4V3L5 7zM13 7a4 4 0 0 1 0 6M16 4a9 9 0 0 1 0 12" />
            </Glyph>
          </TrayItem>
          <TrayItem>中</TrayItem>
          <TrayItem $gap={6}>
            <svg width="20" height="20" viewBox="0 0 20 20">
              <rect x="1" y="1" width="18" height="18" rx="4" fill="#c8643a" />
              <path d="M14 6H8a2 2 0 0 0 0 4h4a2 2 0 0 1 0 4H6" fill="none" stroke="#fff" strokeWidth="2.200" />
            </svg>
          </TrayItem>
          <Clock>12:32<br />2021/7/10</Clock>
        </Tray>
      </Taskbar>
    </Page>
  );
}
